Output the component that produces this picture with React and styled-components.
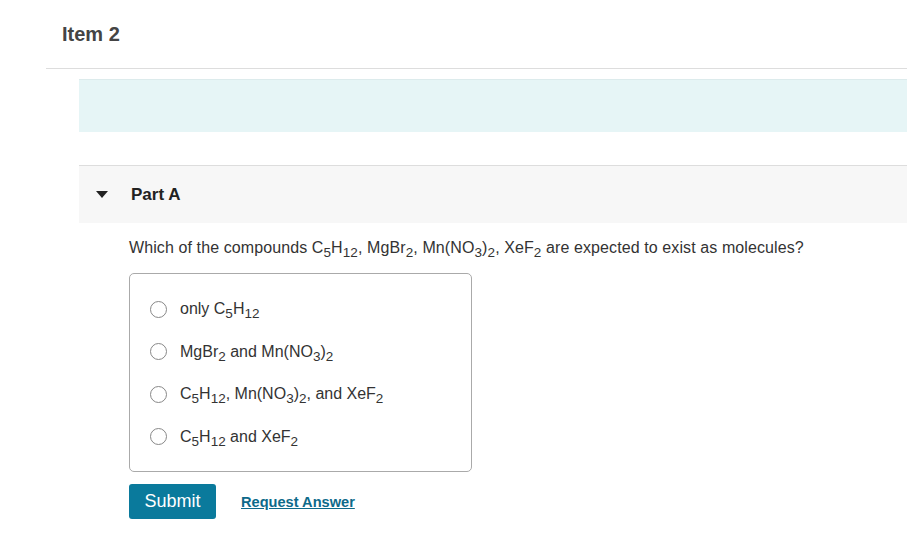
import React from 'react';
import styled, { createGlobalStyle } from 'styled-components';

const GlobalStyle = createGlobalStyle`
  body {
    margin: 0;
    background: #fff;
    font-family: "Liberation Sans", Arial, sans-serif;
    color: #333;
  }
`;

const Sub = styled.sub`
  font-size: 13.5px;
  vertical-align: -4px;
  line-height: 0;
`;

const getOptions = () => [
  <>only C<Sub>5</Sub>H<Sub>12</Sub></>,
  <>MgBr<Sub>2</Sub> and Mn(NO<Sub>3</Sub>)<Sub>2</Sub></>,
  <>C<Sub>5</Sub>H<Sub>12</Sub>, Mn(NO<Sub>3</Sub>)<Sub>2</Sub>, and XeF<Sub>2</Sub></>,
  <>C<Sub>5</Sub>H<Sub>12</Sub> and XeF<Sub>2</Sub></>,
];

const App = () => {
  const options = getOptions();
  return (
    <Page>
      <GlobalStyle />
      <ItemHeader>Item 2</ItemHeader>
      <Body>
        <Banner />
        <PartHeader>
          <Caret viewBox="0 0 12 8">
            <path d="M0 0 L12 0 L6 7 Z" fill="#222" />
          </Caret>
          <PartTitle>Part A</PartTitle>
        </PartHeader>
        <PartContent>
          <Question>
            Which of the compounds C<Sub>5</Sub>H<Sub>12</Sub>, MgBr<Sub>2</Sub>, Mn(NO<Sub>3</Sub>)<Sub>2</Sub>, XeF<Sub>2</Sub> are expected to exist as molecules?
          </Question>
          <OptionsBox>
            {options.map((label, i) => (
              <Option key={i}>
                <Radio />
                <OptionText>{label}</OptionText>
              </Option>
            ))}
          </OptionsBox>
          <Actions>
            <SubmitButton>Submit</SubmitButton>
            <RequestLink href="#">Request Answer</RequestLink>
          </Actions>
        </PartContent>
      </Body>
    </Page>
  );
};

const Page = styled.div`
  padding-left: 46px;
`;

const ItemHeader = styled.div`
  height: 68px;
  padding-left: 16px;
  display: flex;
  align-items: center;
  font-size: 20px;
  font-weight: bold;
  color: #444;
  border-bottom: 1px solid #ddd;
`;

const Body = styled.div`
  padding-left: 33px;
`;

const Banner = styled.div`
  margin-top: 10px;
  height: 52px;
  background: #e6f5f6;
  border-top: 1px solid #dcebec;
`;

const PartHeader = styled.div`
  margin-top: 33px;
  height: 57px;
  display: flex;
  align-items: center;
  padding-left: 17px;
  background: #f7f7f7;
  border-top: 1px solid #ddd;
`;

const Caret = styled.svg`
  width: 12px;
  height: 8px;
  margin-right: 23px;
  margin-top: 1px;
`;

const PartTitle = styled.span`
  font-size: 17px;
  font-weight: bold;
  color: #222;
`;

const PartContent = styled.div`
  padding: 15px 0 0 50px;
`;

const Question = styled.div`
  font-size: 16px;
  line-height: 20px;
  letter-spacing: 0.1px;
  color: #333;
`;

const OptionsBox = styled.div`
  box-sizing: border-box;
  margin-top: 15px;
  width: 343px;
  height: 199px;
  border: 1px solid #aaa;
  border-radius: 5px;
  padding: 14px 0 0 20px;
`;

const Option = styled.div`
  display: flex;
  align-items: center;
  height: 42.5px;
`;

const Radio = styled.span`
  width: 15px;
  height: 15px;
  border: 1px solid #888;
  border-radius: 50%;
  background: #fff;
  margin-right: 13px;
  flex-shrink: 0;
`;

const OptionText = styled.span`
  font-size: 16px;
  color: #333;
`;

const Actions = styled.div`
  margin-top: 12px;
  display: flex;
  align-items: center;
  gap: 25px;
`;

const SubmitButton = styled.button`
  width: 87px;
  height: 35px;
  border: none;
  border-radius: 3px;
  background: #0a7a9c;
  color: #fff;
  font-family: "Liberation Sans", Arial, sans-serif;
  font-size: 18px;
  padding: 0;
`;

const RequestLink = styled.a`
  font-size: 14.6px;
  font-weight: bold;
  color: #0d6a8a;
  text-decoration: underline;
`;

export default App;
